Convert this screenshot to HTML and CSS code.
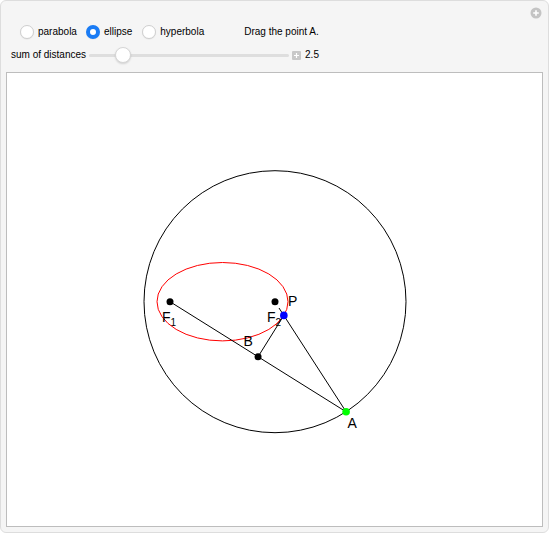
FILE: index.html
```html
<!DOCTYPE html>
<html>
<head>
<meta charset="utf-8">
<link rel="stylesheet" href="styles.css">
</head>
<body>
<div class="panel">
  <svg class="corner-plus" width="12" height="12" viewBox="0 0 12 12">
    <circle cx="6" cy="6" r="5.5" fill="#c4c4c4"/>
    <path d="M6 3.2V8.8M3.2 6H8.8" stroke="#fff" stroke-width="1.6"/>
  </svg>
  <div class="row1">
    <span class="radio"></span><span class="lbl lbl-parabola">parabola</span>
    <span class="radio on"></span><span class="lbl lbl-ellipse">ellipse</span>
    <span class="radio"></span><span class="lbl lbl-hyper">hyperbola</span>
    <span class="lbl">Drag the point A.</span>
  </div>
  <div class="row2">
    <span class="lbl">sum of distances</span>
    <div class="slider"><div class="track"></div><div class="thumb"></div></div>
    <svg class="box-plus" width="9" height="9" viewBox="0 0 9 9">
      <rect x="0" y="0" width="9" height="9" rx="1" fill="#c8c8c8"/>
      <path d="M4.5 2V7M2 4.5H7" stroke="#fff" stroke-width="1.2"/>
    </svg>
    <span class="lbl">2.5</span>
  </div>
  <div class="plot">
    <svg class="canvas" width="535" height="453" viewBox="7 73 535 453">
      <circle cx="275" cy="301.7" r="131" fill="none" stroke="#000" stroke-width="1"/>
      <ellipse cx="222.5" cy="301.7" rx="65.5" ry="39.2" fill="none" stroke="#ff0000" stroke-width="1"/>
      <line x1="170" y1="301.7" x2="346.1" y2="411.8" stroke="#000" stroke-width="1"/>
      <line x1="258.05" y1="356.75" x2="283.85" y2="315.4" stroke="#000" stroke-width="1"/>
      <line x1="279" y1="308" x2="346.1" y2="411.8" stroke="#000" stroke-width="1"/>
      <circle cx="170" cy="301.7" r="3.5" fill="#000"/>
      <circle cx="275" cy="301.7" r="3.5" fill="#000"/>
      <circle cx="258.05" cy="356.75" r="3.5" fill="#000"/>
      <circle cx="283.85" cy="315.4" r="3.8" fill="#0000ff"/>
      <circle cx="346.1" cy="411.8" r="3.8" fill="#00ff00"/>
      <text class="lab" x="162" y="322">F<tspan class="sub" dy="4">1</tspan></text>
      <text class="lab" x="267" y="322">F<tspan class="sub" dy="4">2</tspan></text>
      <text class="lab" x="288" y="306">P</text>
      <text class="lab" x="243.5" y="346">B</text>
      <text class="lab" x="347.5" y="428">A</text>
    </svg>
  </div>
</div>
</body>
</html>
```

FILE: styles.css
```css
html, body {
  margin: 0;
  padding: 0;
  background: #ffffff;
}
.panel {
  position: relative;
  box-sizing: border-box;
  width: 549px;
  height: 533px;
  background: #f5f5f5;
  border: 1px solid #dddddd;
  border-radius: 6px;
  font-family: "Liberation Sans", Arial, sans-serif;
  font-size: 10px;
  color: #000000;
}
.corner-plus {
  position: absolute;
  top: 6px;
  right: 6px;
}
.row1 {
  display: flex;
  align-items: center;
  height: 14px;
  margin-top: 24px;
  padding-left: 19px;
}
.radio {
  box-sizing: border-box;
  width: 14px;
  height: 14px;
  border-radius: 50%;
  background: #ffffff;
  border: 1px solid #cfcfcf;
  box-shadow: 0 0.5px 1px rgba(0,0,0,0.08);
  margin-right: 4px;
}
.radio.on {
  background: #ffffff;
  border: 4px solid #1a7cf5;
}
.lbl {
  line-height: 14px;
  white-space: nowrap;
}
.lbl-parabola { margin-right: 9px; }
.lbl-ellipse { margin-right: 10px; }
.lbl-hyper { margin-right: 40px; }
.row2 {
  display: flex;
  align-items: center;
  height: 16px;
  margin-top: 8px;
  padding-left: 10px;
}
.slider {
  position: relative;
  width: 200px;
  height: 16px;
  margin-left: 3px;
  margin-right: 3px;
}
.track {
  position: absolute;
  left: 0;
  right: 0;
  top: 6.5px;
  height: 3px;
  border-radius: 2px;
  background: #dedede;
}
.thumb {
  position: absolute;
  left: 26px;
  top: 0;
  box-sizing: border-box;
  width: 16px;
  height: 16px;
  border-radius: 50%;
  background: #ffffff;
  border: 1px solid #d6d6d6;
  box-shadow: 0 1px 2px rgba(0,0,0,0.15);
}
.box-plus {
  margin-right: 4px;
}
.plot {
  box-sizing: border-box;
  margin: 9px 0 0 5px;
  width: 537px;
  height: 455px;
  background: #ffffff;
  border: 1px solid #bdbdbd;
}
.canvas {
  display: block;
}
.lab {
  font-family: "Liberation Sans", Arial, sans-serif;
  font-size: 14px;
  fill: #000;
}
.sub {
  font-size: 10px;
}
```
